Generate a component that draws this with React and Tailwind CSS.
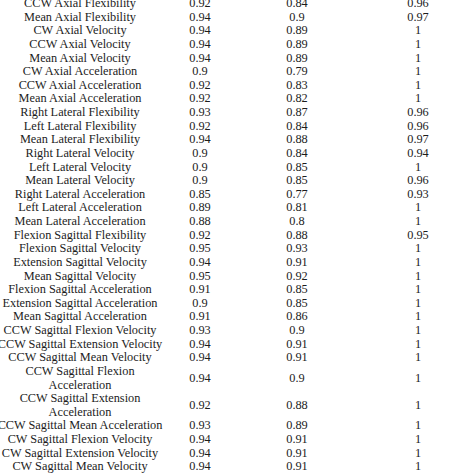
const rows = [
  ["CCW Axial Flexibility", "0.92", "0.84", "0.96"],
  ["Mean Axial Flexibility", "0.94", "0.9", "0.97"],
  ["CW Axial Velocity", "0.94", "0.89", "1"],
  ["CCW Axial Velocity", "0.94", "0.89", "1"],
  ["Mean Axial Velocity", "0.94", "0.89", "1"],
  ["CW Axial Acceleration", "0.9", "0.79", "1"],
  ["CCW Axial Acceleration", "0.92", "0.83", "1"],
  ["Mean Axial Acceleration", "0.92", "0.82", "1"],
  ["Right Lateral Flexibility", "0.93", "0.87", "0.96"],
  ["Left Lateral Flexibility", "0.92", "0.84", "0.96"],
  ["Mean Lateral Flexibility", "0.94", "0.88", "0.97"],
  ["Right Lateral Velocity", "0.9", "0.84", "0.94"],
  ["Left Lateral Velocity", "0.9", "0.85", "1"],
  ["Mean Lateral Velocity", "0.9", "0.85", "0.96"],
  ["Right Lateral Acceleration", "0.85", "0.77", "0.93"],
  ["Left Lateral Acceleration", "0.89", "0.81", "1"],
  ["Mean Lateral Acceleration", "0.88", "0.8", "1"],
  ["Flexion Sagittal Flexibility", "0.92", "0.88", "0.95"],
  ["Flexion Sagittal Velocity", "0.95", "0.93", "1"],
  ["Extension Sagittal Velocity", "0.94", "0.91", "1"],
  ["Mean Sagittal Velocity", "0.95", "0.92", "1"],
  ["Flexion Sagittal Acceleration", "0.91", "0.85", "1"],
  ["Extension Sagittal Acceleration", "0.9", "0.85", "1"],
  ["Mean Sagittal Acceleration", "0.91", "0.86", "1"],
  ["CCW Sagittal Flexion Velocity", "0.93", "0.9", "1"],
  ["CCW Sagittal Extension Velocity", "0.94", "0.91", "1"],
  ["CCW Sagittal Mean Velocity", "0.94", "0.91", "1"],
  [["CCW Sagittal Flexion", "Acceleration"], "0.94", "0.9", "1"],
  [["CCW Sagittal Extension", "Acceleration"], "0.92", "0.88", "1"],
  ["CCW Sagittal Mean Acceleration", "0.93", "0.89", "1"],
  ["CW Sagittal Flexion Velocity", "0.94", "0.91", "1"],
  ["CW Sagittal Extension Velocity", "0.94", "0.91", "1"],
  ["CW Sagittal Mean Velocity", "0.94", "0.91", "1"],
];

export default function App() {
  return (
    <div className="w-[474px] h-[474px] overflow-hidden bg-white text-[#1c1c1c]">
      <div
        className="mt-[-3px] text-[12.3px] leading-[13.62px]"
        style={{ fontFamily: '"Liberation Serif", "DejaVu Serif", serif' }}
      >
        {rows.map(([label, a, b, c], i) => (
          <div key={i} className="grid grid-cols-[160px_80px_114px_128px] items-center">
            <div className="flex flex-col items-center whitespace-nowrap">
              {Array.isArray(label) ? (
                <>
                  <span>{label[0]}</span>
                  <span>{label[1]}</span>
                </>
              ) : (
                <span>{label}</span>
              )}
            </div>
            <div className="text-center">{a}</div>
            <div className="text-center">{b}</div>
            <div className="text-center">{c}</div>
          </div>
        ))}
      </div>
    </div>
  );
}
